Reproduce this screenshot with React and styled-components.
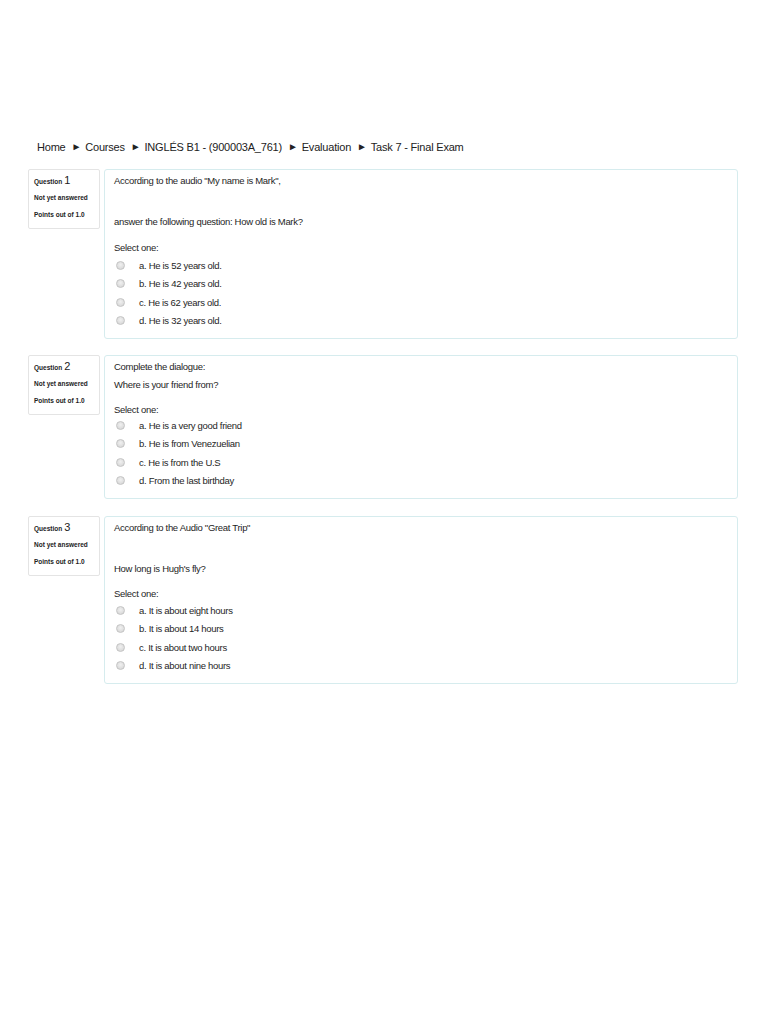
import React from "react";
import styled, { createGlobalStyle } from "styled-components";

const Global = createGlobalStyle`
  html, body { margin: 0; padding: 0; background: #fff; }
  body { font-family: "Liberation Sans", Arial, sans-serif; color: #333; }
`;

const Page = styled.div`
  width: 768px;
  min-height: 1024px;
  padding: 139px 30px 0 28px;
  box-sizing: border-box;
`;

const Breadcrumb = styled.nav`
  display: flex;
  align-items: center;
  gap: 4px;
  padding-left: 9px;
  font-size: 11px;
  line-height: 16px;
  letter-spacing: -0.2px;
  color: #222;
  margin-bottom: 14px;
`;

const Arrow = styled.span`
  font-size: 10px;
  margin-left: 2px;
`;

const Question = styled.div`
  display: flex;
  align-items: flex-start;
  gap: 4px;
  margin-bottom: ${(p) => p.$mb}px;
`;

const Info = styled.div`
  width: 72px;
  box-sizing: border-box;
  border: 1px solid #e4e4e4;
  border-radius: 2px;
  padding: 2px 5px 5px 5px;
  font-weight: bold;
  font-size: 6.5px;
  color: #222;
`;

const InfoLine = styled.div`
  height: 17px;
  line-height: 17px;
  white-space: nowrap;
`;

const QNum = styled.span`
  font-size: 11px;
  font-weight: normal;
  margin-left: 2px;
`;

const Content = styled.div`
  flex: 1;
  box-sizing: border-box;
  border: 1px solid #d6ecee;
  border-radius: 3px;
  padding: 2px 9px 8px 9px;
  font-size: 9.5px;
  letter-spacing: -0.3px;
  color: #1e1e1e;
`;

const Line = styled.div`
  line-height: 18px;
`;

const Spacer = styled.div`
  height: 23px;
`;

const SelectOne = styled.div`
  line-height: 18px;
  margin-top: ${(p) => p.$gap}px;
`;

const Options = styled.div`
  display: flex;
  flex-direction: column;
  margin-top: ${(p) => p.$mt}px;
`;

const Option = styled.label`
  display: flex;
  align-items: center;
  height: 18.5px;
  padding-left: 2px;
`;

const Radio = styled.span`
  width: 9px;
  height: 9px;
  border-radius: 50%;
  border: 1px solid #c4c4c4;
  background: radial-gradient(circle at 50% 40%, #f0f0f0, #d2d2d2);
  box-sizing: border-box;
  margin-right: 14px;
  flex-shrink: 0;
`;

const questions = [
  {
    n: 1,
    lines: ['According to the audio "My name is Mark",', null, "answer the following question: How old is Mark?"],
    options: ["a. He is 52 years old.", "b. He is 42 years old.", "c. He is 62 years old.", "d. He is 32 years old."],
    gap: 8,
    mt: -1,
    mb: 16,
  },
  {
    n: 2,
    lines: ["Complete the dialogue:", "Where is your friend from?"],
    options: ["a. He is a very good friend", "b. He is from Venezuelian", "c. He is from the U.S", "d. From the last birthday"],
    gap: 7,
    mt: -3,
    mb: 17,
  },
  {
    n: 3,
    lines: ['According to the Audio "Great Trip"', null, "How long is Hugh's fly?"],
    options: ["a. It is about eight hours", "b. It is about 14 hours", "c. It is about two hours", "d. It is about nine hours"],
    gap: 7,
    mt: -2,
    mb: 16,
  },
];

export default function App() {
  const crumbs = ["Home", "Courses", "INGLÉS B1 - (900003A_761)", "Evaluation", "Task 7 - Final Exam"];
  return (
    <Page>
      <Global />
      <Breadcrumb>
        {crumbs.map((c, i) => (
          <React.Fragment key={c}>
            {i > 0 && <Arrow>►</Arrow>}
            <span>{c}</span>
          </React.Fragment>
        ))}
      </Breadcrumb>
      {questions.map((q) => (
        <Question key={q.n} $mb={q.mb}>
          <Info>
            <InfoLine>
              Question<QNum>{q.n}</QNum>
            </InfoLine>
            <InfoLine>Not yet answered</InfoLine>
            <InfoLine>Points out of 1.0</InfoLine>
          </Info>
          <Content>
            {q.lines.map((l, i) => (l === null ? <Spacer key={i} /> : <Line key={i}>{l}</Line>))}
            <SelectOne $gap={q.gap}>Select one:</SelectOne>
            <Options $mt={q.mt}>
              {q.options.map((o) => (
                <Option key={o}>
                  <Radio />
                  {o}
                </Option>
              ))}
            </Options>
          </Content>
        </Question>
      ))}
    </Page>
  );
}
